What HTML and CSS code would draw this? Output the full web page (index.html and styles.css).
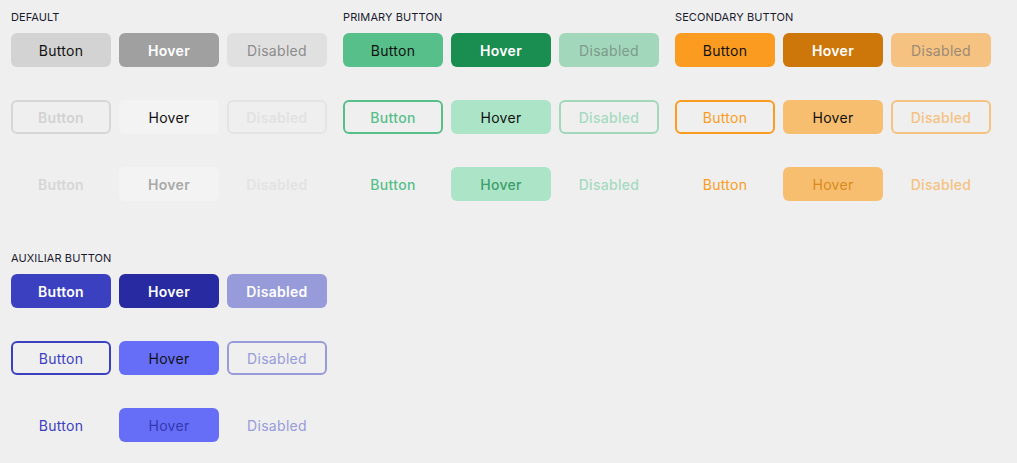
FILE: index.html
```html
<!DOCTYPE html>
<html lang="en">
<head>
    <meta charset="UTF-8">
    <meta name="viewport" content="width=device-width, initial-scale=1.0">
    <title>Buttons</title>
    <link rel="stylesheet" href="styles.css">
</head>
<body>

    <div class="groups">

        <!-- Default -->
        <section class="group default">
            <h2>Default</h2>
            <div class="grid">
                <button class="btn fill">Button</button>
                <button class="btn fill hover">Hover</button>
                <button class="btn fill disabled">Disabled</button>

                <button class="btn outline">Button</button>
                <button class="btn outline hover">Hover</button>
                <button class="btn outline disabled">Disabled</button>

                <button class="btn ghost">Button</button>
                <button class="btn ghost hover">Hover</button>
                <button class="btn ghost disabled">Disabled</button>
            </div>
        </section>

        <!-- Primary -->
        <section class="group primary">
            <h2>Primary button</h2>
            <div class="grid">
                <button class="btn fill">Button</button>
                <button class="btn fill hover">Hover</button>
                <button class="btn fill disabled">Disabled</button>

                <button class="btn outline">Button</button>
                <button class="btn outline hover">Hover</button>
                <button class="btn outline disabled">Disabled</button>

                <button class="btn ghost">Button</button>
                <button class="btn ghost hover">Hover</button>
                <button class="btn ghost disabled">Disabled</button>
            </div>
        </section>

        <!-- Secondary -->
        <section class="group secondary">
            <h2>Secondary button</h2>
            <div class="grid">
                <button class="btn fill">Button</button>
                <button class="btn fill hover">Hover</button>
                <button class="btn fill disabled">Disabled</button>

                <button class="btn outline">Button</button>
                <button class="btn outline hover">Hover</button>
                <button class="btn outline disabled">Disabled</button>

                <button class="btn ghost">Button</button>
                <button class="btn ghost hover">Hover</button>
                <button class="btn ghost disabled">Disabled</button>
            </div>
        </section>

        <!-- Auxiliar -->
        <section class="group auxiliar">
            <h2>Auxiliar button</h2>
            <div class="grid">
                <button class="btn fill">Button</button>
                <button class="btn fill hover">Hover</button>
                <button class="btn fill disabled">Disabled</button>

                <button class="btn outline">Button</button>
                <button class="btn outline hover">Hover</button>
                <button class="btn outline disabled">Disabled</button>

                <button class="btn ghost">Button</button>
                <button class="btn ghost hover">Hover</button>
                <button class="btn ghost disabled">Disabled</button>
            </div>
        </section>

    </div>

</body>
</html>
```

FILE: styles.css
```css
body {
    margin: 0;
    padding: 9px 11px;
    background-color: #efefef;
    font-family: Inter, "Open Sans", sans-serif;
}
.groups {
    display: grid;
    grid-template-columns: repeat(3, 316px);
    column-gap: 16px;
    row-gap: 49px;
}
.group h2 {
    margin: 0 0 8px 0;
    font-size: 11px;
    font-weight: 400;
    line-height: 16px;
    letter-spacing: 0.1px;
    text-transform: uppercase;
    color: #1a1a2e;
}
.grid {
    display: grid;
    grid-template-columns: repeat(3, 100px);
    column-gap: 8px;
    row-gap: 33px;
}
.btn {
    height: 34px;
    padding: 0;
    border: 2px solid transparent;
    border-radius: 6px;
    background: transparent;
    font-family: inherit;
    font-size: 14px;
    font-weight: 400;
    letter-spacing: 0.3px;
    cursor: pointer;
}

/* default */
.default .fill { background-color: #d3d3d3; color: #111; }
.default .fill.hover { background-color: #a0a0a0; color: #fff; font-weight: 600; }
.default .fill.disabled { background-color: #e0e0e0; color: #8c8c8c; }
.default .outline { border-color: #d6d6d6; color: #d2d2d2; font-weight: 600; }
.default .outline.hover { border-color: transparent; background-color: #f3f3f3; color: #111; font-weight: 400; }
.default .outline.disabled { border-color: #e4e4e4; color: #e2e2e2; }
.default .ghost { color: #d6d6d6; font-weight: 600; }
.default .ghost.hover { background-color: #f3f3f3; color: #a9a9a9; }
.default .ghost.disabled { color: #e3e3e3; }

/* primary */
.primary .fill { background-color: #57bf8a; color: #111; }
.primary .fill.hover { background-color: #1a8d51; color: #fff; font-weight: 600; }
.primary .fill.disabled { background-color: #a2d7bb; color: #7d9a8a; }
.primary .outline { border-color: #57bf8a; color: #57bf8a; font-weight: 500; }
.primary .outline.hover { border-color: transparent; background-color: #abe4c7; color: #111; font-weight: 400; }
.primary .outline.disabled { border-color: #a2d7bb; color: #a5dbbf; }
.primary .ghost { color: #57bf8a; font-weight: 500; }
.primary .ghost.hover { background-color: #abe4c7; color: #3e9e6c; }
.primary .ghost.disabled { color: #a5dbbf; }

/* secondary */
.secondary .fill { background-color: #fb9c21; color: #111; }
.secondary .fill.hover { background-color: #cd770b; color: #fff; font-weight: 600; }
.secondary .fill.disabled { background-color: #f5c282; color: #9b8a74; }
.secondary .outline { border-color: #fb9c21; color: #fb9c21; }
.secondary .outline.hover { border-color: transparent; background-color: #f7be70; color: #111; }
.secondary .outline.disabled { border-color: #f5c282; color: #f5c282; font-weight: 500; }
.secondary .ghost { color: #fb9c21; }
.secondary .ghost.hover { background-color: #f7be70; color: #d98a1c; }
.secondary .ghost.disabled { color: #f5c282; font-weight: 500; }

/* auxiliar */
.auxiliar .fill { background-color: #3b40c0; color: #fff; font-weight: 600; }
.auxiliar .fill.hover { background-color: #272aa0; }
.auxiliar .fill.disabled { background-color: #979bda; }
.auxiliar .outline { border-color: #3b40c0; color: #3b40c0; }
.auxiliar .outline.hover { border-color: transparent; background-color: #666ef8; color: #111; }
.auxiliar .outline.disabled { border-color: #979bda; color: #979bda; }
.auxiliar .ghost { color: #3b40c0; }
.auxiliar .ghost.hover { background-color: #666ef8; color: #3438b0; }
.auxiliar .ghost.disabled { color: #979bda; }
```
